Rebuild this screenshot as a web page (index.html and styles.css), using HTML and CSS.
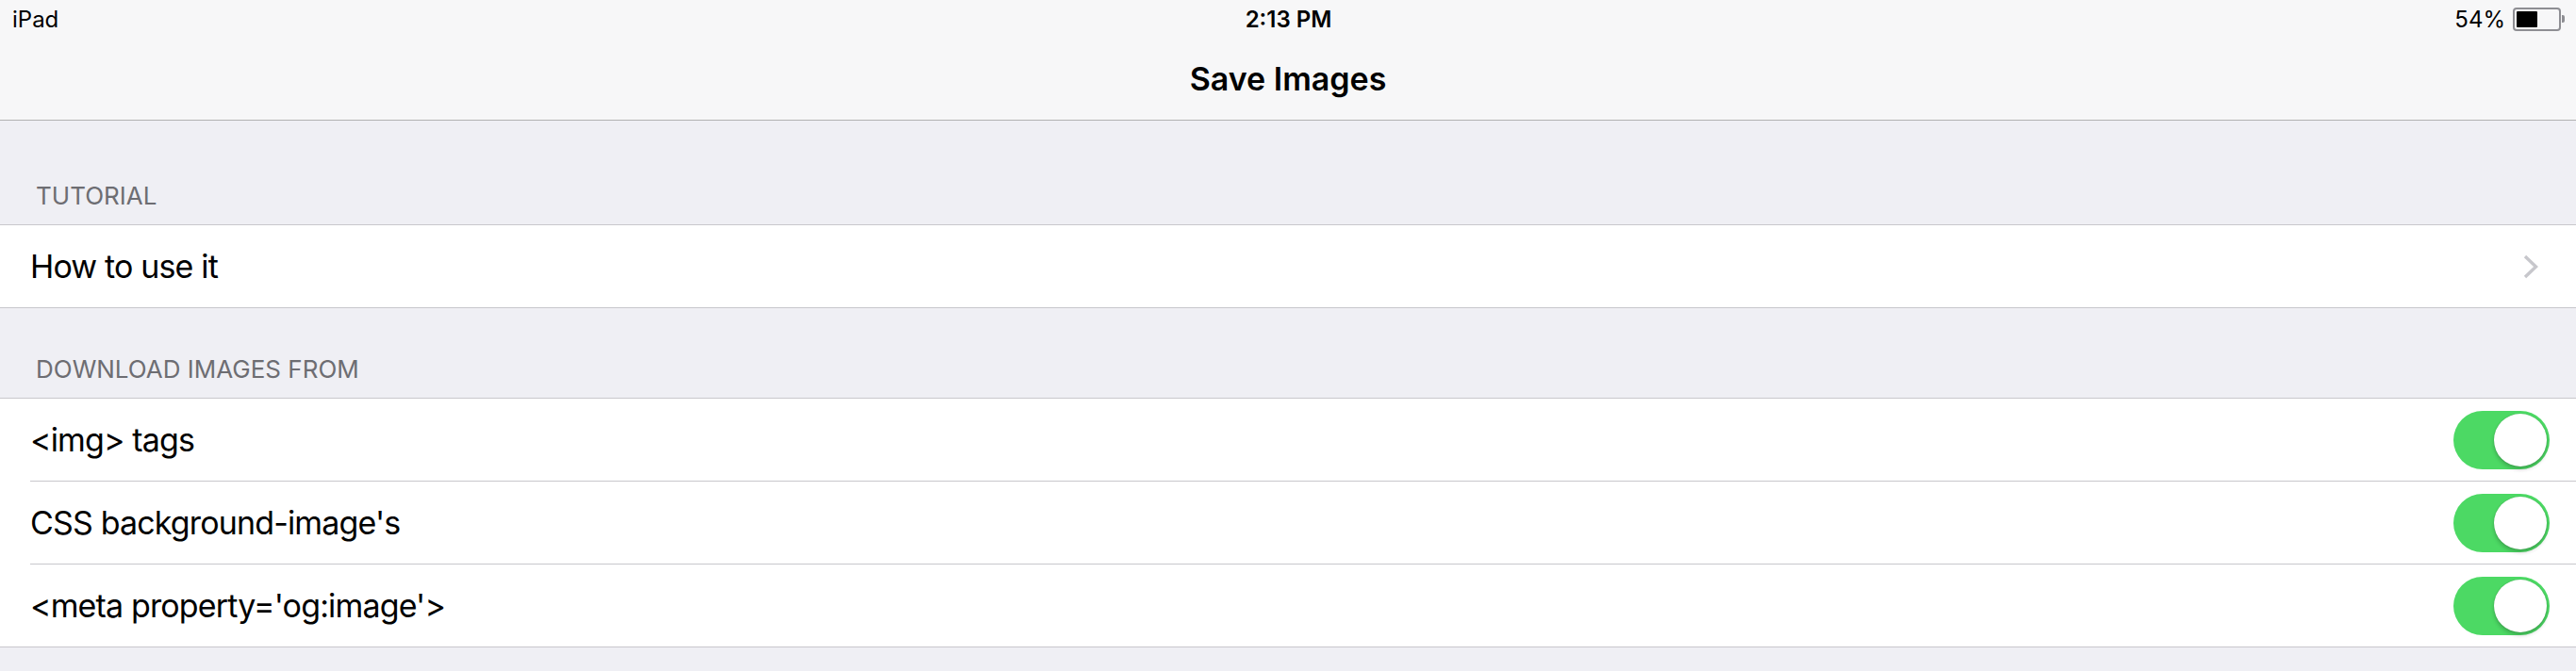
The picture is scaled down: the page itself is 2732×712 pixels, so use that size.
FILE: index.html
```html
<!DOCTYPE html>
<html lang="en">
<head>
    <meta charset="UTF-8">
    <title>Save Images</title>
    <link rel="stylesheet" href="styles.css">
</head>
<body>
    <!-- Шапка: статус-бар и навигация -->
    <div class="topbar">
        <div class="status">
            <span class="device">iPad</span>
            <span class="clock">2:13 PM</span>
            <span class="power">
                54%
                <span class="battery"><span class="charge"></span></span>
                <span class="nub"></span>
            </span>
        </div>
        <div class="nav">Save Images</div>
    </div>

    <div class="section-head first">TUTORIAL</div>
    <div class="group">
        <div class="row">
            <span class="label">How to use it</span>
            <svg class="chevron" width="16" height="26" viewBox="0 0 16 26">
                <polyline points="2,2 13.5,13 2,24" fill="none" stroke="#c7c7cc" stroke-width="3.4"/>
            </svg>
        </div>
    </div>

    <div class="section-head">DOWNLOAD IMAGES FROM</div>
    <div class="group">
        <div class="row">
            <span class="label">&lt;img&gt; tags</span>
            <span class="switch"><span class="knob"></span></span>
        </div>
        <div class="row">
            <span class="label">CSS background-image's</span>
            <span class="switch"><span class="knob"></span></span>
        </div>
        <div class="row">
            <span class="label">&lt;meta property='og:image'&gt;</span>
            <span class="switch"><span class="knob"></span></span>
        </div>
    </div>
</body>
</html>
```

FILE: styles.css
```css
body {
    font-family: Inter, "Noto Sans", sans-serif;
    margin: 0;
    background-color: #efeff4;
    color: #000;
    height: 712px;
    overflow: hidden;
}

/* Шапка */
.topbar {
    background-color: #f7f7f8;
    border-bottom: 1px solid #b2b2b2;
}

.status {
    height: 40px;
    display: grid;
    grid-template-columns: 1fr auto 1fr;
    align-items: center;
    padding: 0 12px 0 13px;
    font-size: 24px;
}

.clock {
    font-weight: 600;
}

.power {
    justify-self: end;
    display: flex;
    align-items: center;
}

.battery {
    display: inline-flex;
    width: 43px;
    height: 17px;
    margin-left: 8px;
    padding: 2px;
    border: 2px solid #8e8e93;
    border-radius: 4px;
}

.battery .charge {
    width: 22px;
    background-color: #000;
    border-radius: 1px;
}

.nub {
    width: 3px;
    height: 8px;
    margin-left: 1px;
    background-color: #8e8e93;
    border-radius: 0 2px 2px 0;
}

.nav {
    height: 87px;
    display: flex;
    align-items: center;
    justify-content: center;
    font-size: 34px;
    font-weight: 600;
}

/* Секции */
.section-head {
    height: 95px;
    display: flex;
    align-items: flex-end;
    padding: 0 38px 15px;
    box-sizing: border-box;
    font-size: 26px;
    color: #6d6d72;
}

.section-head.first {
    height: 110px;
}

.group {
    background-color: #fff;
    border-top: 1px solid #c8c7cc;
    border-bottom: 1px solid #c8c7cc;
}

.row {
    height: 87px;
    display: flex;
    align-items: center;
    justify-content: space-between;
    margin-left: 32px;
    padding-right: 28px;
    font-size: 34px;
    letter-spacing: -0.85px;
}

.row + .row {
    border-top: 1px solid #c8c7cc;
}

.chevron {
    margin-right: 12px;
}

/* Переключатель */
.switch {
    display: flex;
    justify-content: flex-end;
    width: 102px;
    height: 62px;
    padding: 3px;
    box-sizing: border-box;
    background-color: #4cd964;
    border-radius: 31px;
}

.knob {
    width: 56px;
    height: 56px;
    border-radius: 50%;
    background-color: #fff;
    box-shadow: 0 3px 4px rgba(0, 0, 0, 0.22), 0 0 1px rgba(0, 0, 0, 0.25);
}
```
